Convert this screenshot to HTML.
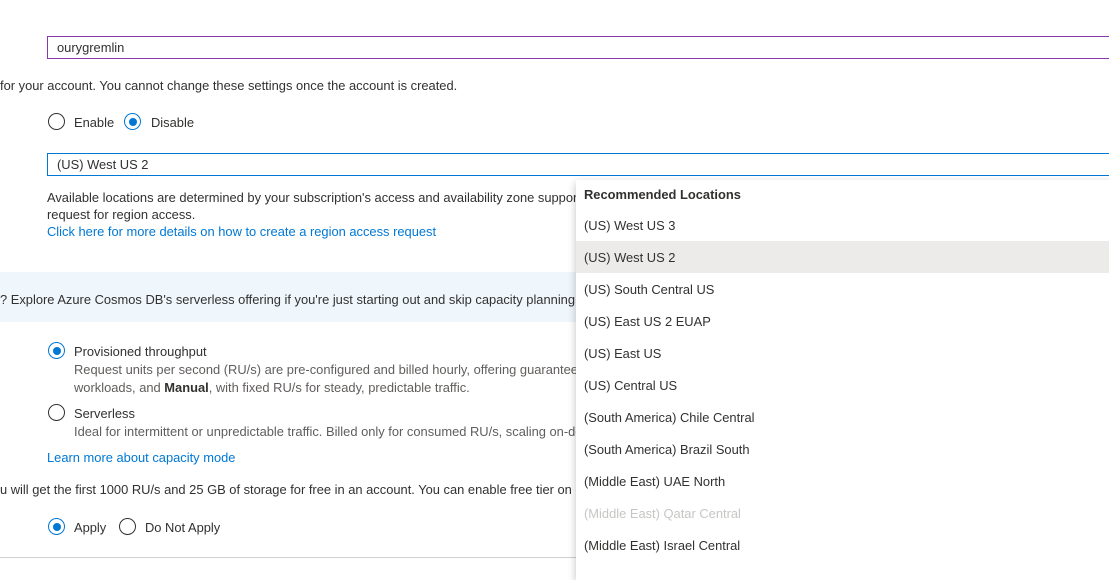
<!DOCTYPE html>
<html><head><style>
body{margin:0;width:1109px;height:568px;overflow:hidden;background:#fff;font-family:"Liberation Sans",sans-serif;font-size:12.9px;color:#323130;position:relative}
.a{position:absolute;white-space:nowrap}
.inp{position:absolute;left:47px;width:1070px;height:23px;box-sizing:border-box;padding-left:9px;line-height:22px}
.r{position:absolute;width:17px;height:17px;border:1px solid #323130;border-radius:50%;box-sizing:border-box}
.r.on{border-color:#0078d4}
.r.on::after{content:"";position:absolute;left:3.5px;top:3.5px;width:8px;height:8px;border-radius:50%;background:#0078d4}
.link{color:#0078d4}
.dd{position:absolute;left:576px;top:180px;width:540px;height:400px;background:#fff;box-shadow:0 3px 8px rgba(0,0,0,.25)}
.it{position:absolute;left:0;width:540px;height:32px;line-height:32px;padding-left:8px;box-sizing:border-box}
</style></head><body>
<div class="inp" style="top:36px;border:1px solid #8a3aa8">ourygremlin</div>
<div class="a" style="left:0;top:78px">for your account. You cannot change these settings once the account is created.</div>
<div class="r" style="left:48px;top:113px"></div><div class="a" style="left:74px;top:115px">Enable</div>
<div class="r on" style="left:124px;top:113px"></div><div class="a" style="left:151px;top:115px">Disable</div>
<div class="inp" style="top:153px;border:1px solid #0078d4">(US) West US 2</div>
<div class="a" style="left:47px;top:190px">Available locations are determined by your subscription's access and availability zone support.</div>
<div class="a" style="left:47px;top:207px">request for region access.</div>
<div class="a link" style="left:47px;top:224px">Click here for more details on how to create a region access request</div>
<div class="a" style="left:0;top:272px;width:576px;height:50px;background:#eff6fc"></div>
<div class="a" style="left:0;top:292px">? Explore Azure Cosmos DB's serverless offering if you're just starting out and skip capacity planning by only paying</div>
<div class="r on" style="left:48px;top:342px"></div><div class="a" style="left:74px;top:344px">Provisioned throughput</div>
<div class="a" style="left:74px;top:362px;color:#605e5c">Request units per second (RU/s) are pre-configured and billed hourly, offering guaranteed</div>
<div class="a" style="left:74px;top:380px;color:#605e5c">workloads, and <b style="color:#323130">Manual</b>, with fixed RU/s for steady, predictable traffic.</div>
<div class="r" style="left:48px;top:404px"></div><div class="a" style="left:74px;top:406px">Serverless</div>
<div class="a" style="left:74px;top:424px;color:#605e5c">Ideal for intermittent or unpredictable traffic. Billed only for consumed RU/s, scaling on-demand</div>
<div class="a link" style="left:47px;top:450px">Learn more about capacity mode</div>
<div class="a" style="left:0;top:482px">u will get the first 1000 RU/s and 25 GB of storage for free in an account. You can enable free tier on one</div>
<div class="r on" style="left:48px;top:518px"></div><div class="a" style="left:74px;top:520px">Apply</div>
<div class="r" style="left:119px;top:518px"></div><div class="a" style="left:145px;top:520px">Do Not Apply</div>
<div class="a" style="left:0;top:557px;width:576px;height:1px;background:#d2d0ce"></div>
<div class="dd">
<div class="it" style="top:-1px;font-weight:bold;color:#323130">Recommended Locations</div>
<div class="it" style="top:30px">(US) West US 3</div>
<div class="it" style="top:61px;background:#edebe9;line-height:34px">(US) West US 2</div>
<div class="it" style="top:94px">(US) South Central US</div>
<div class="it" style="top:126px">(US) East US 2 EUAP</div>
<div class="it" style="top:158px">(US) East US</div>
<div class="it" style="top:190px">(US) Central US</div>
<div class="it" style="top:222px">(South America) Chile Central</div>
<div class="it" style="top:254px">(South America) Brazil South</div>
<div class="it" style="top:286px">(Middle East) UAE North</div>
<div class="it" style="top:318px;color:#c8c6c4">(Middle East) Qatar Central</div>
<div class="it" style="top:350px">(Middle East) Israel Central</div>
</div>
</body></html>
